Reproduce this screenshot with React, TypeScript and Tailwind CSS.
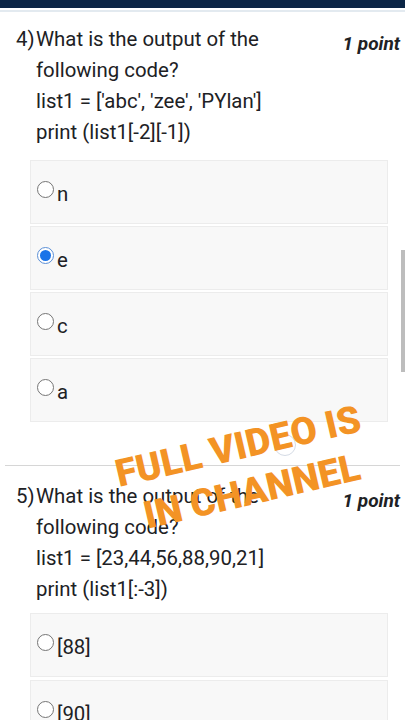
import React from 'react';

type Opt = { label: string; checked?: boolean };

function Radio({ checked }: { checked?: boolean }) {
  if (checked) {
    return (
      <span className="flex items-center justify-center w-[17px] h-[17px] rounded-full border border-[#5b8fd6] bg-white shrink-0">
        <span className="w-[11px] h-[11px] rounded-full bg-[#1a73e8]" />
      </span>
    );
  }
  return <span className="block w-[17px] h-[17px] rounded-full border border-[#757575] bg-white shrink-0" />;
}

function Options({ items, gap }: { items: Opt[]; gap: string }) {
  return (
    <div className={`ml-[30px] w-[358px] flex flex-col ${gap}`}>
      {items.map((o) => (
        <div key={o.label} className="h-[64px] bg-[#f8f8f8] border border-[#ececec] flex items-start pl-[6px] pt-[20px]">
          <Radio checked={o.checked} />
          <span className="ml-[3px] text-[20.4px] leading-[26px] text-[#202124]">{o.label}</span>
        </div>
      ))}
    </div>
  );
}

function Question({ num, lines }: { num: string; lines: string[] }) {
  return (
    <div className="flex text-[20.4px] leading-[31px] text-[#202124]">
      <div className="w-[36px] pl-[16px] shrink-0">{num}</div>
      <div className="flex-1">
        {lines.map((l) => (
          <div key={l} className="whitespace-nowrap">{l}</div>
        ))}
      </div>
      <div className="pr-[5px] font-bold italic text-[19px] leading-[31px] pt-[4px]">1 point</div>
    </div>
  );
}

export default function App() {
  return (
    <div className="relative w-[405px] h-[720px] overflow-hidden bg-white font-['Roboto',sans-serif]">
      <div className="h-[8px] bg-[#0b2545]" />
      <div className="h-[2px] mt-[2px] bg-[#e3eaf0]" />

      <div className="mt-[12px]">
        <Question
          num="4)"
          lines={['What is the output of the', 'following code?', "list1 = ['abc', 'zee', 'PYlan']", 'print (list1[-2][-1])']}
        />
      </div>
      <div className="mt-[12px]">
        <Options gap="gap-[2px]" items={[{ label: 'n' }, { label: 'e', checked: true }, { label: 'c' }, { label: 'a' }]} />
      </div>

      <div className="mt-[43px] mx-[5px] h-px bg-[#d6d6d6]" />

      <div className="mt-[15px]">
        <Question
          num="5)"
          lines={['What is the output of the', 'following code?', 'list1 = [23,44,56,88,90,21]', 'print (list1[:-3])']}
        />
      </div>
      <div className="mt-[8px]">
        <Options gap="gap-[3px]" items={[{ label: '[88]' }, { label: '[90]' }, { label: '[21]' }]} />
      </div>

      {/* scrollbar */}
      <div className="absolute left-[401px] top-[250px] w-[4px] h-[122px] bg-[#bdbdbd]" />

      {/* loading ring */}
      <div className="absolute left-[274px] top-[434px] w-[22px] h-[22px] rounded-full border-[1.5px] border-[#d5dbe5]" />

      {/* watermark */}
      <div className="absolute left-[111px] top-[452px] -rotate-[13deg] origin-top-left text-[#f39325] font-['Roboto',sans-serif] font-black text-[38px] leading-[47px] pointer-events-none">
        <div className="whitespace-nowrap">FULL VIDEO IS</div>
        <div className="whitespace-nowrap pl-[18px]">IN CHANNEL</div>
      </div>
    </div>
  );
}
